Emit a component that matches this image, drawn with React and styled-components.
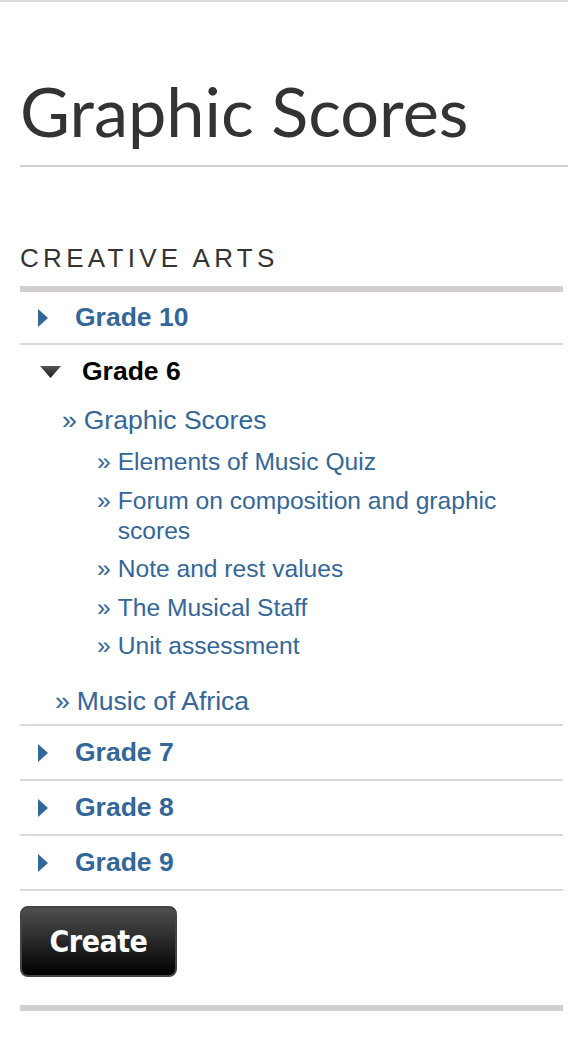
import React from "react";
import styled, { createGlobalStyle } from "styled-components";

const GlobalStyle = createGlobalStyle`
  body {
    margin: 0;
    background: #fff;
    font-family: "Liberation Sans", Arial, sans-serif;
  }
`;

const LINK = "#336699";

const grades = [
  { name: "Grade 10", height: 51 },
  {
    name: "Grade 6",
    open: true,
    units: [
      {
        name: "Graphic Scores",
        indent: 42,
        items: [
          "Elements of Music Quiz",
          "Forum on composition and graphic scores",
          "Note and rest values",
          "The Musical Staff",
          "Unit assessment",
        ],
      },
      { name: "Music of Africa", indent: 35 },
    ],
  },
  { name: "Grade 7" },
  { name: "Grade 8" },
  { name: "Grade 9" },
];

function Arrow({ open }) {
  if (open) {
    return (
      <ArrowIcon width="21" height="12" viewBox="0 0 21 12">
        <defs>
          <linearGradient id="dg" x1="0" y1="0" x2="0" y2="1">
            <stop offset="0" stopColor="#555" />
            <stop offset="1" stopColor="#1a1a1a" />
          </linearGradient>
        </defs>
        <polygon points="0,0 21,0 10.5,12" fill="url(#dg)" />
      </ArrowIcon>
    );
  }
  return (
    <ArrowIcon width="10" height="18" viewBox="0 0 10 18">
      <polygon points="0,0 10,9 0,18" fill={LINK} />
    </ArrowIcon>
  );
}

class App extends React.Component {
  render() {
    return (
      <Page>
        <GlobalStyle />
        <Title>Graphic Scores</Title>
        <Heading>Creative Arts</Heading>
        <Nav>
          {grades.map((g) => (
            <Grade key={g.name}>
              <GradeRow $open={g.open} $height={g.height || 53}>
                <Arrow open={g.open} />
                <GradeLink href="#" $open={g.open}>
                  {g.name}
                </GradeLink>
              </GradeRow>
              {g.units && (
                <Units>
                  {g.units.map((u) => (
                    <Unit key={u.name}>
                      <Entry $indent={u.indent} $size={26.5}>
                        <Raquo>»</Raquo>
                        <a href="#">{u.name}</a>
                      </Entry>
                      {u.items && (
                        <Items>
                          {u.items.map((it) => (
                            <Entry key={it} $indent={77} $size={24.6}>
                              <Raquo>»</Raquo>
                              <a href="#">{it}</a>
                            </Entry>
                          ))}
                        </Items>
                      )}
                    </Unit>
                  ))}
                </Units>
              )}
            </Grade>
          ))}
        </Nav>
        <CreateButton>Create</CreateButton>
        <BottomBar />
      </Page>
    );
  }
}
export default App;

const Page = styled.div`
  border-top: 2px solid #dedada;
  padding-left: 20px;
  padding-bottom: 27px;
`;

const Title = styled.h1`
  margin: 0;
  padding: 75px 0 20px;
  font-family: Lato, "Open Sans", sans-serif;
  font-weight: 400;
  font-size: 68.5px;
  line-height: 68px;
  color: #333;
  border-bottom: 2px solid #d6d2d2;
`;

const Heading = styled.h2`
  margin: 76px 0 13px;
  font-size: 26px;
  line-height: 30px;
  font-weight: 400;
  letter-spacing: 4.3px;
  text-transform: uppercase;
  color: #333;
`;

const Nav = styled.ul`
  list-style: none;
  margin: 0 5px 0 0;
  padding: 0;
  border-top: 6px solid #d5d0d0;
`;

const Grade = styled.li`
  border-bottom: 2px solid #ddd9d9;
`;

const GradeRow = styled.div`
  display: flex;
  align-items: center;
  height: ${(p) => p.$height}px;
  padding-left: ${(p) => (p.$open ? 20 : 18)}px;
  gap: ${(p) => (p.$open ? 21 : 27)}px;
`;

const ArrowIcon = styled.svg`
  display: block;
  flex: none;
`;

const GradeLink = styled.a`
  font-size: 26.5px;
  font-weight: 700;
  color: ${(p) => (p.$open ? "#000" : LINK)};
  text-decoration: none;
`;

const Units = styled.ul`
  list-style: none;
  margin: 7px 0 0;
  padding: 0 0 8px;
  display: flex;
  flex-direction: column;
  gap: 25px;
`;

const Unit = styled.li`
  display: flex;
  flex-direction: column;
  gap: 12px;
`;

const Items = styled.div`
  display: flex;
  flex-direction: column;
  gap: 8.5px;
`;

const Entry = styled.div`
  display: flex;
  gap: 7px;
  padding-left: ${(p) => p.$indent}px;
  font-size: ${(p) => p.$size}px;
  line-height: 30px;
  color: ${LINK};

  a {
    color: ${LINK};
    text-decoration: none;
  }
`;

const Raquo = styled.span`
  flex: none;
`;

const CreateButton = styled.button`
  display: block;
  margin-top: 15px;
  width: 157px;
  height: 71px;
  border: 2px solid #444;
  border-radius: 8px;
  background: linear-gradient(#4f4f4f, #000);
  color: #fff;
  font-family: "DejaVu Sans Condensed", "DejaVu Sans", sans-serif;
  font-weight: 700;
  font-size: 30px;
  letter-spacing: -0.5px;
  padding: 0;
  cursor: pointer;
`;

const BottomBar = styled.div`
  margin: 28px 5px 0 0;
  height: 6px;
  background: #d5d0d0;
`;
